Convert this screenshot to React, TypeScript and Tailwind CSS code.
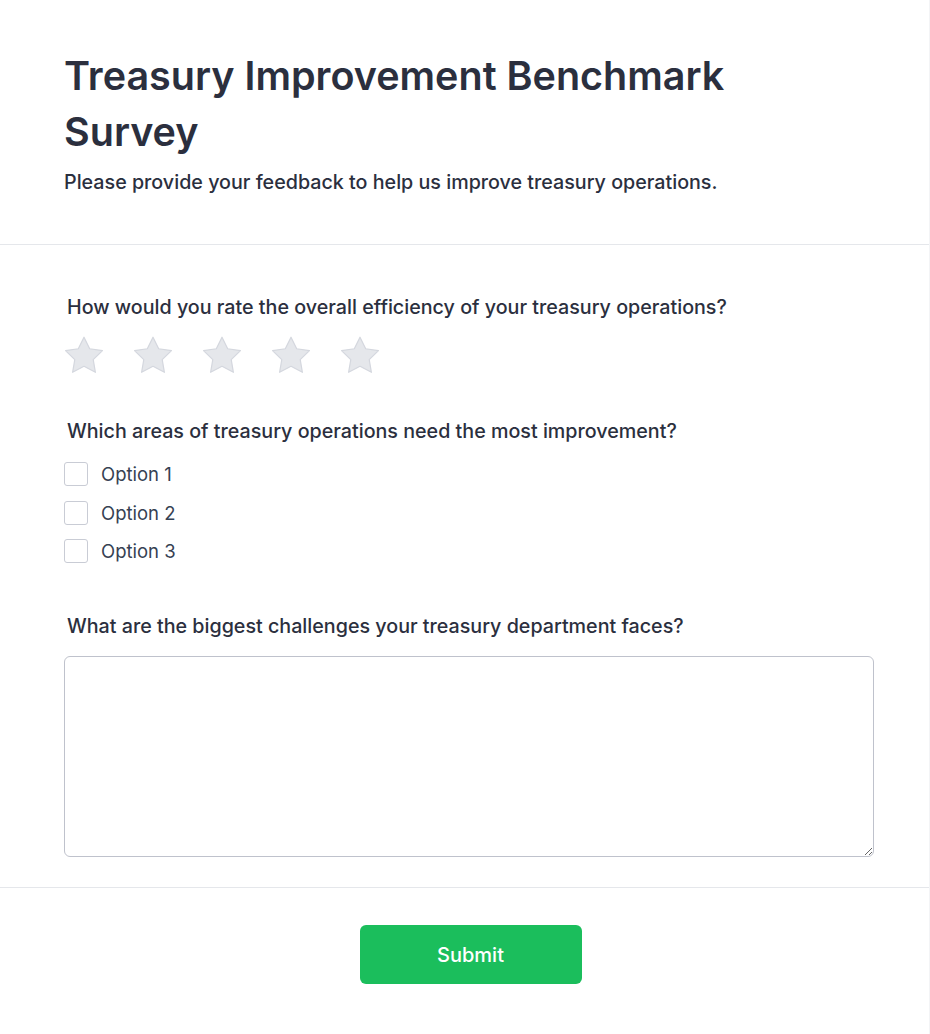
import React, { useState } from "react";

const Star = ({ active, onClick }: { active: boolean; onClick: () => void }) => (
  <button type="button" onClick={onClick} className="w-[48px] h-[48px] flex items-center justify-center">
    <svg viewBox="0 0 24 24" className="w-[48px] h-[48px]">
      <path
        d="M12 2.6l2.85 5.78 6.38.93-4.62 4.5 1.09 6.35L12 17.17l-5.7 2.99 1.09-6.35-4.62-4.5 6.38-.93z"
        fill={active ? "#facc15" : "#e5e7eb"}
        stroke={active ? "#eab308" : "#d4d7de"}
        strokeWidth="0.6"
        strokeLinejoin="round"
      />
    </svg>
  </button>
);

const options = ["Option 1", "Option 2", "Option 3"];

export default function App() {
  const [rating, setRating] = useState(0);
  const [checked, setChecked] = useState<string[]>([]);
  const [text, setText] = useState("");

  const toggle = (o: string) =>
    setChecked(checked.includes(o) ? checked.filter((c) => c !== o) : [...checked, o]);

  return (
    <main
      className="min-h-screen bg-white border-r border-gray-100"
      style={{ fontFamily: "Inter, 'Noto Sans', sans-serif" }}
    >
      <header className="pl-16 pr-[55px] pt-12 pb-12 border-b border-gray-200">
        <h1 className="text-[39.5px] leading-[56px] font-semibold text-[#2b2f3e] max-w-[700px]">
          Treasury Improvement Benchmark Survey
        </h1>
        <p className="mt-2 text-[19.7px] leading-7 font-medium text-[#2b2f3e]">
          Please provide your feedback to help us improve treasury operations.
        </p>
      </header>

      <section className="pl-16 pr-[55px] pt-12 pb-[30px]">
        <p className="pl-[3px] text-[19.7px] leading-7 font-medium text-[#2b2f3e]">
          How would you rate the overall efficiency of your treasury operations?
        </p>
        <div className="mt-[11px] -ml-[4px] flex gap-[21px]">
          {[1, 2, 3, 4, 5].map((n) => (
            <Star key={n} active={n <= rating} onClick={() => setRating(n)} />
          ))}
        </div>

        <p className="mt-[37px] pl-[3px] text-[19.7px] leading-7 font-medium text-[#2b2f3e]">
          Which areas of treasury operations need the most improvement?
        </p>
        <div className="mt-[15px] flex flex-col gap-[10.5px]">
          {options.map((o) => (
            <label key={o} className="flex items-center gap-[13px] cursor-pointer">
              <input
                type="checkbox"
                checked={checked.includes(o)}
                onChange={() => toggle(o)}
                className="appearance-none w-6 h-6 rounded-[3px] border border-[#c9ccd5] bg-white checked:bg-[#1bbe5c] checked:border-[#1bbe5c]"
              />
              <span className="text-[18.5px] leading-7 text-gray-700">{o}</span>
            </label>
          ))}
        </div>

        <p className="mt-[47px] pl-[3px] text-[19.7px] leading-7 font-medium text-[#2b2f3e]">
          What are the biggest challenges your treasury department faces?
        </p>
        <textarea
          value={text}
          onChange={(e) => setText(e.target.value)}
          className="mt-4 block w-full h-[201px] rounded-md border border-[#bfc2cc] p-3 text-base text-gray-800 outline-none"
        />
      </section>

      <footer className="border-t border-gray-200 pt-[37px] pb-[51px] pl-3 flex justify-center">
        <button
          type="button"
          className="w-[222px] h-[59px] rounded-md bg-[#1bbe5c] text-white text-xl font-medium"
        >
          Submit
        </button>
      </footer>
    </main>
  );
}
